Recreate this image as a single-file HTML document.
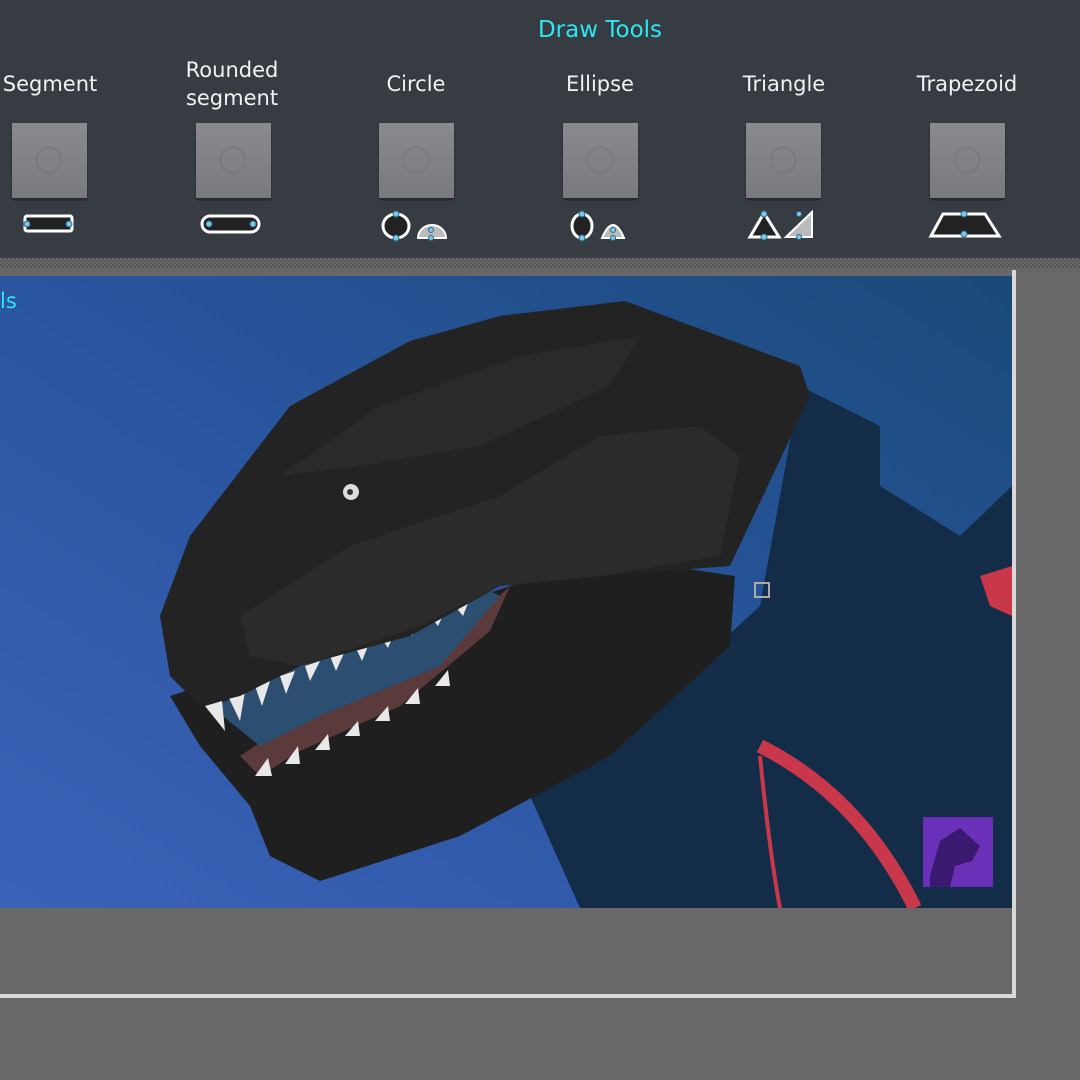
<!DOCTYPE html>
<html><head><style>
body{margin:0;width:1080px;height:1080px;background:#686868;overflow:hidden;position:relative;font-family:"DejaVu Sans","Liberation Sans",sans-serif}
.top{position:absolute;left:0;top:0;width:1080px;height:258px;background:#373c43}
.chk{position:absolute;left:0;top:258px;width:1080px;height:10px;background:repeating-conic-gradient(#555 0 25%,#6a6a6a 0 50%) 0 0/4px 4px}
.title{position:absolute;top:17px;left:0;width:1200px;text-align:center;color:#2ee6f0;font-size:23px}
.lbl{position:absolute;color:#f2f2f2;font-size:21px;text-align:center;width:160px;line-height:28px}
.btn{position:absolute;top:123px;width:75px;height:75px;background:linear-gradient(#8a8a8e,#7a7a7e);box-shadow:0 2px 2px rgba(0,0,0,.4)}
.btn::after{content:"";position:absolute;left:24px;top:24px;width:24px;height:24px;border-radius:50%;border:1.5px solid #747478}
.frame{position:absolute;left:1012px;top:270px;width:4px;height:728px;background:#d8d8d8}
.fb{position:absolute;left:0;top:994px;width:1016px;height:4px;background:#d8d8d8}
</style></head><body>
<div class="top"></div>
<div class="chk"></div>
<div class="title">Draw Tools</div>
<div class="lbl" style="left:-30px;top:70px">Segment</div>
<div class="lbl" style="left:152px;top:56px">Rounded<br>segment</div>
<div class="lbl" style="left:336px;top:70px">Circle</div>
<div class="lbl" style="left:520px;top:70px">Ellipse</div>
<div class="lbl" style="left:704px;top:70px">Triangle</div>
<div class="lbl" style="left:887px;top:70px">Trapezoid</div>
<div class="btn" style="left:12px"></div>
<div class="btn" style="left:196px"></div>
<div class="btn" style="left:379px"></div>
<div class="btn" style="left:563px"></div>
<div class="btn" style="left:746px"></div>
<div class="btn" style="left:930px"></div>
<svg style="position:absolute;left:0;top:200px" width="1080" height="50">
<g stroke="#fff" stroke-width="3" fill="#222">
<rect x="25" y="16" width="47" height="15" rx="2"/>
<rect x="202" y="16" width="57" height="16" rx="8"/>
<ellipse cx="396" cy="26" rx="13" ry="12"/>
<ellipse cx="582" cy="26" rx="10" ry="12"/>
<path d="M750 37 L764 13 L779 37Z"/>
<path d="M931 36 L943 14 L985 14 L999 36Z"/>
</g>
<g fill="#bbb" stroke="#fff" stroke-width="2">
<path d="M418 38 A14 13 0 0 1 446 38Z"/>
<path d="M602 38 Q613 12 624 38Z"/>
<path d="M786 37 L812 12 L812 37Z"/>
</g>
<g fill="#7cc8e8" stroke="#2a6b88" stroke-width="1">
<circle cx="27" cy="24" r="3"/><circle cx="69" cy="24" r="3"/>
<circle cx="209" cy="24" r="3"/><circle cx="253" cy="24" r="3"/>
<circle cx="396" cy="14" r="3"/><circle cx="396" cy="38" r="3"/>
<circle cx="431" cy="30" r="2.5"/><circle cx="431" cy="38" r="2.5"/>
<circle cx="582" cy="14" r="3"/><circle cx="582" cy="38" r="3"/>
<circle cx="613" cy="30" r="2.5"/><circle cx="613" cy="38" r="2.5"/>
<circle cx="764" cy="14" r="3"/><circle cx="764" cy="37" r="3"/>
<circle cx="799" cy="14" r="2.5"/><circle cx="799" cy="37" r="2.5"/>
<circle cx="964" cy="14" r="3"/><circle cx="964" cy="34" r="3"/>
</g>
</svg>
<svg style="position:absolute;left:0;top:276px" width="1012" height="632">
<defs>
<linearGradient id="bg" x1="0" y1="1" x2="1" y2="0">
<stop offset="0" stop-color="#3c62b8"/><stop offset="0.5" stop-color="#2a55a0"/><stop offset="1" stop-color="#1a4a78"/></linearGradient>
</defs>
<rect width="1012" height="632" fill="url(#bg)"/>
<path d="M530 520 L640 440 L760 330 L800 110 L880 150 L880 210 L960 260 L1012 210 L1012 632 L580 632Z" fill="#132c48"/>
<path d="M980 300 L1012 290 L1012 340 L990 330Z" fill="#c8384a"/>
<path d="M760 470 Q860 520 915 632" stroke="#c8384a" stroke-width="14" fill="none"/>
<path d="M760 480 Q770 580 780 632" stroke="#c8384a" stroke-width="4" fill="none"/>
<path d="M170 420 L200 470 L250 530 L270 580 L320 605 L460 560 L610 480 L730 370 L735 300 L600 280 L480 320 Z" fill="#1f1f1f"/>
<path d="M240 480 L300 440 L430 385 L510 310 L490 355 L400 430 L300 475 L260 500Z" fill="#5a3a3a"/>
<path d="M210 430 L260 470 L320 440 L440 390 L500 320 L480 310 L400 360 L300 390 L240 420Z" fill="#2c4e70"/>
<g fill="#e8e8e8">
<path d="M205 430 L222 425 L225 455Z"/><path d="M228 420 L245 415 L240 445Z"/><path d="M255 410 L270 405 L262 430Z"/><path d="M280 400 L295 395 L286 418Z"/><path d="M305 390 L320 385 L310 405Z"/><path d="M330 380 L345 375 L336 395Z"/><path d="M355 370 L370 365 L362 385Z"/><path d="M380 360 L395 355 L388 372Z"/><path d="M405 350 L420 345 L412 360Z"/><path d="M430 340 L445 335 L438 350Z"/><path d="M455 330 L470 322 L463 340Z"/>
<path d="M255 500 L268 482 L272 500Z"/><path d="M285 488 L298 470 L300 488Z"/><path d="M315 474 L328 458 L330 474Z"/><path d="M345 460 L358 445 L360 460Z"/><path d="M375 445 L388 430 L390 445Z"/><path d="M405 428 L418 412 L420 428Z"/><path d="M435 410 L448 394 L450 410Z"/>
</g>
<path d="M160 340 L190 260 L290 130 L410 65 L500 40 L625 25 L800 90 L810 120 L730 290 L600 300 L500 310 L410 360 L300 390 L240 420 L200 430 L170 400 Z" fill="#232323"/>
<path d="M280 200 L380 130 L520 80 L640 60 L610 110 L480 170 L360 190Z" fill="#2a2a2a"/>
<path d="M240 340 L350 270 L500 220 L600 160 L700 150 L740 180 L720 280 L600 300 L500 310 L420 350 L300 390 L250 380Z" fill="#2b2b2b"/>
<circle cx="351" cy="216" r="8" fill="#ddd"/><circle cx="350" cy="216" r="3" fill="#333"/>
<rect x="755" y="307" width="14" height="14" fill="none" stroke="#aaa" stroke-width="2"/>
<text x="0" y="32" fill="#2ee6f0" font-size="21" font-family="DejaVu Sans,sans-serif">ls</text>
<rect x="923" y="541" width="70" height="70" fill="#6a30b8"/>
<path d="M930 600 L940 565 L960 552 L980 570 L972 585 L955 590 L950 611 L930 611Z" fill="#3a1a70"/>
</svg>
<div class="frame"></div>
<div class="fb"></div>
</body></html>
